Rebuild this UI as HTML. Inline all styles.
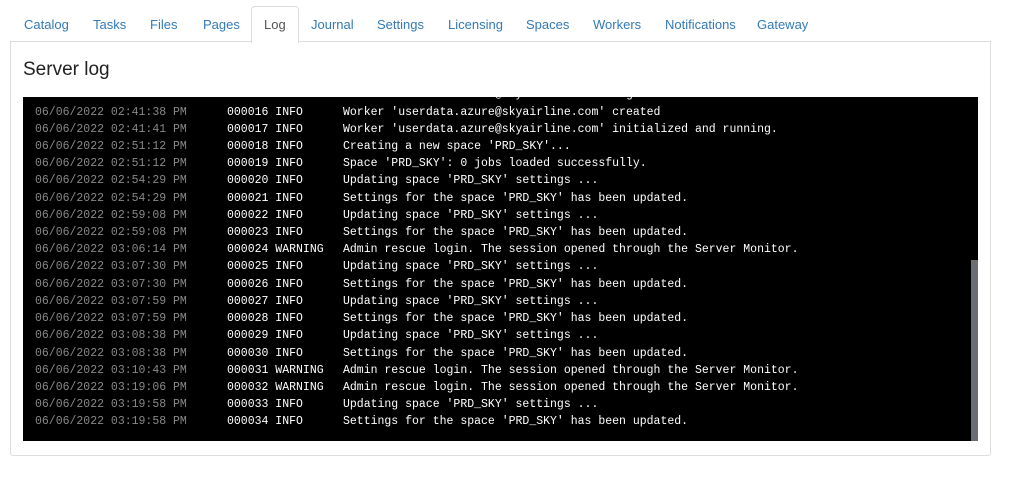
<!DOCTYPE html>
<html><head><style>
body{margin:0;background:#fff;width:1024px;height:479px;overflow:hidden;position:relative;font-family:"Liberation Sans",sans-serif}
.t{position:absolute;top:17px;font-size:13px;color:#337ab7;white-space:nowrap}
.logtab{position:absolute;left:251px;top:6px;width:46px;height:36px;border:1px solid #ddd;border-bottom:none;border-radius:4px 4px 0 0;background:#fff;z-index:2}
.card{position:absolute;left:10px;top:41px;width:979px;height:413px;border:1px solid #ddd;border-radius:0 0 3px 3px}
h1{position:absolute;left:23px;top:59px;margin:0;font-size:19px;font-weight:normal;color:#222}
.box{position:absolute;left:23px;top:97px;width:955px;height:344px;background:#000;overflow:hidden}
.sb{position:absolute;left:971px;top:260px;width:7px;height:181px;background:#6b6e72}
.l{position:absolute;font-family:"Liberation Mono",monospace;font-size:11.5px;color:#fff;white-space:pre;line-height:14px}
.d{position:absolute;left:12px;color:#888}
.i{position:absolute;left:204px}
.m{position:absolute;left:320px}
</style></head><body>
<span class="t" style="left:24px">Catalog</span>
<span class="t" style="left:93px">Tasks</span>
<span class="t" style="left:150px">Files</span>
<span class="t" style="left:203px">Pages</span>
<div class="logtab"></div>
<span class="t" style="left:264px;color:#555;z-index:3">Log</span>
<span class="t" style="left:311px">Journal</span>
<span class="t" style="left:377px">Settings</span>
<span class="t" style="left:448px">Licensing</span>
<span class="t" style="left:526px">Spaces</span>
<span class="t" style="left:593px">Workers</span>
<span class="t" style="left:665px">Notifications</span>
<span class="t" style="left:757px">Gateway</span>
<div class="card"></div>
<h1>Server log</h1>
<div class="box" id="b"></div>
<div class="sb"></div>
<script>
var rows=[
["06/06/2022 02:41:30 PM","000015 INFO","Worker 'userdata.azure@skyairline.com' registered"],
["06/06/2022 02:41:38 PM","000016 INFO","Worker 'userdata.azure@skyairline.com' created"],
["06/06/2022 02:41:41 PM","000017 INFO","Worker 'userdata.azure@skyairline.com' initialized and running."],
["06/06/2022 02:51:12 PM","000018 INFO","Creating a new space 'PRD_SKY'..."],
["06/06/2022 02:51:12 PM","000019 INFO","Space 'PRD_SKY': 0 jobs loaded successfully."],
["06/06/2022 02:54:29 PM","000020 INFO","Updating space 'PRD_SKY' settings ..."],
["06/06/2022 02:54:29 PM","000021 INFO","Settings for the space 'PRD_SKY' has been updated."],
["06/06/2022 02:59:08 PM","000022 INFO","Updating space 'PRD_SKY' settings ..."],
["06/06/2022 02:59:08 PM","000023 INFO","Settings for the space 'PRD_SKY' has been updated."],
["06/06/2022 03:06:14 PM","000024 WARNING","Admin rescue login. The session opened through the Server Monitor."],
["06/06/2022 03:07:30 PM","000025 INFO","Updating space 'PRD_SKY' settings ..."],
["06/06/2022 03:07:30 PM","000026 INFO","Settings for the space 'PRD_SKY' has been updated."],
["06/06/2022 03:07:59 PM","000027 INFO","Updating space 'PRD_SKY' settings ..."],
["06/06/2022 03:07:59 PM","000028 INFO","Settings for the space 'PRD_SKY' has been updated."],
["06/06/2022 03:08:38 PM","000029 INFO","Updating space 'PRD_SKY' settings ..."],
["06/06/2022 03:08:38 PM","000030 INFO","Settings for the space 'PRD_SKY' has been updated."],
["06/06/2022 03:10:43 PM","000031 WARNING","Admin rescue login. The session opened through the Server Monitor."],
["06/06/2022 03:19:06 PM","000032 WARNING","Admin rescue login. The session opened through the Server Monitor."],
["06/06/2022 03:19:58 PM","000033 INFO","Updating space 'PRD_SKY' settings ..."],
["06/06/2022 03:19:58 PM","000034 INFO","Settings for the space 'PRD_SKY' has been updated."]];
var h="";
rows.forEach(function(r,k){var y=8.5+17.22*(k-1);h+='<div class="l" style="top:'+y+'px;left:0;width:955px"><span class="d">'+r[0]+'</span><span class="i">'+r[1]+'</span><span class="m">'+r[2]+'</span></div>';});
document.getElementById('b').innerHTML=h;
</script>
</body></html>
